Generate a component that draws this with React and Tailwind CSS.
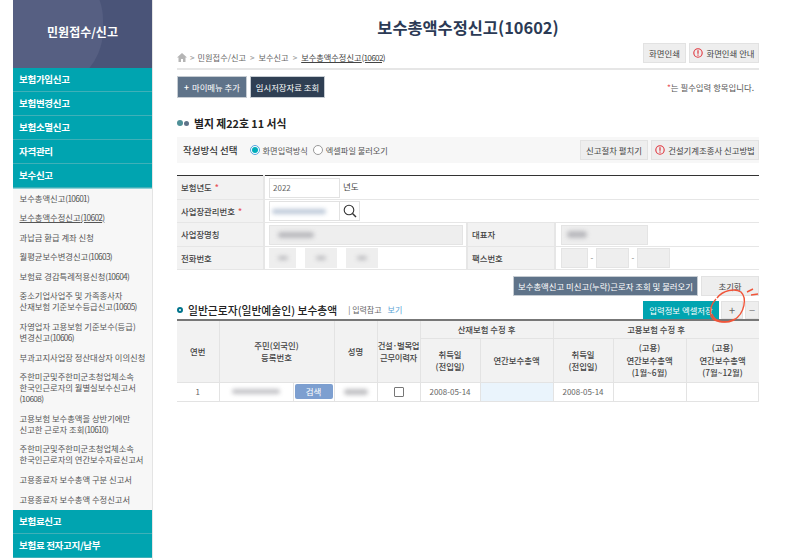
import React from 'react';

const font = "[font-family:'Noto_Sans_CJK_KR','Noto_Sans',sans-serif]";

const topMenu = ['보험가입신고', '보험변경신고', '보험소멸신고', '자격관리', '보수신고'];
const subMenu = [
  { lines: ['보수총액신고(10601)'] },
  { lines: ['보수총액수정신고(10602)'], active: true },
  { lines: ['과납금 환급 계좌 신청'] },
  { lines: ['월평균보수변경신고(10603)'] },
  { lines: ['보험료 경감특례적용신청(10604)'] },
  { lines: ['중소기업사업주 및 가족종사자', '산재보험 기준보수등급신고(10605)'] },
  { lines: ['자영업자 고용보험 기준보수(등급)', '변경신고(10606)'] },
  { lines: ['부과고지사업장 정산대상자 이의신청'] },
  { lines: ['주한미군및주한미군초청업체소속', '한국인근로자의 월별실보수신고서', '(10608)'] },
  { lines: ['고용보험 보수총액을 상반기에만', '신고한 근로자 조회(10610)'] },
  { lines: ['주한미군및주한미군초청업체소속', '한국인근로자의 연간보수자료신고서'] },
  { lines: ['고용종료자 보수총액 구분 신고서'] },
  { lines: ['고용종료자 보수총액 수정신고서'] },
];

// form numbers like (10601) are set much tighter than the hangul
function Tight({ text }) {
  return text.split(/(\(\d+\))/).map((part, i) =>
    /^\(\d+\)$/.test(part)
      ? <span key={i} className="tracking-[-0.7px]">{part}</span>
      : <span key={i}>{part}</span>
  );
}

function MenuBar({ label }) {
  return (
    <div className="h-6 flex items-center pl-[6px] bg-[#00a4b0] border-b border-[#3fb0b8] text-[9.5px] tracking-[-0.3px] font-bold text-white">
      {label}
    </div>
  );
}

function Sidebar() {
  return (
    <aside className="w-[140px] ml-[13px] shrink-0 h-[560px] overflow-hidden border-r border-[#e4e4e4]">
      <div className="relative h-[68px] bg-[#4a5478] overflow-hidden flex items-center justify-center text-[12px] font-bold text-white">
        <div className="absolute -left-[30px] -top-[40px] w-[120px] h-[130px] rounded-full bg-[#565f82]" />
        <span className="relative -mt-[4px]">민원접수/신고</span>
      </div>
      {topMenu.map((m) => <MenuBar key={m} label={m} />)}
      <ul className="bg-[#f7f7f7] h-[322px] border-t border-[#8fd3d8] text-[#555] text-[8.3px] leading-[11px]">
        {subMenu.map((s, i) => (
          <li key={i} className="pl-[6.5px] py-[3.5px] mb-[1.6px] whitespace-nowrap">
            {s.lines.map((l) => (
              <div key={l} className={s.active ? 'underline' : ''}><Tight text={l} /></div>
            ))}
          </li>
        ))}
      </ul>
      <MenuBar label="보험료신고" />
      <MenuBar label="보험료 전자고지/납부" />
    </aside>
  );
}

function AlertIcon() {
  return (
    <svg width="10" height="10" viewBox="0 0 10 10" className="shrink-0">
      <circle cx="5" cy="5" r="4.2" fill="none" stroke="#e0343c" strokeWidth="1.1" />
      <rect x="4.4" y="2.2" width="1.2" height="3.6" fill="#e0343c" />
      <rect x="4.4" y="6.5" width="1.2" height="1.2" fill="#e0343c" />
    </svg>
  );
}

function GrayBtn({ children, className = '' }) {
  return (
    <button className={`flex items-center justify-center gap-[3px] whitespace-nowrap bg-[#eeeeee] border border-[#e2e2e2] text-[#444] text-[8.4px] ${className}`}>
      {children}
    </button>
  );
}

function Blur({ className = '' }) {
  return <div className={`bg-[#b9b9bd] blur-[2px] rounded-sm ${className}`} />;
}

function Label({ children, req }) {
  return (
    <td className="bg-[#f2f2f2] border-b border-r-2 border-[#e6e6e6] pl-[4px] text-[8.4px] font-medium text-[#444]">
      {children}
      {req && <span className="text-[#e8555a] ml-[3px]">*</span>}
    </td>
  );
}

function Disabled({ className = '' }) {
  return <div className={`h-5 bg-[#eeeeee] border border-[#e4e4e4] ${className}`} />;
}

function InfoForm() {
  return (
    <table className="w-[582px] mt-[12px] table-fixed border-collapse border-t border-[#333]">
      <colgroup>
        <col className="w-[87px]" />
        <col className="w-[203px]" />
        <col className="w-[88px]" />
        <col />
      </colgroup>
      <tbody>
        <tr className="h-6">
          <Label req>보험년도</Label>
          <td colSpan={3} className="border-b border-[#e6e6e6] pl-[4px]">
            <div className="flex items-start gap-[3px] text-[8.5px] text-[#444]">
              <div className="w-[71px] h-5 border border-[#e2e2e2] flex items-center pl-[3px] text-[8px] text-[#666]">2022</div>
              <span className="leading-[16px]">년도</span>
            </div>
          </td>
        </tr>
        <tr className="h-[23px]">
          <Label req>사업장관리번호</Label>
          <td colSpan={3} className="border-b border-[#e6e6e6] pl-[4px]">
            <div className="flex w-[91px] h-5 border border-[#e2e2e2]">
              <div className="w-[70px] border-r border-[#e2e2e2] flex items-center pl-[2px]">
                <Blur className="w-[54px] h-[5px] bg-[#bcc8d8]" />
              </div>
              <div className="flex-1 flex items-center justify-center">
                <svg width="14" height="14" viewBox="0 0 14 14" fill="none" stroke="#333" strokeWidth="1.1">
                  <circle cx="6" cy="6" r="4.8" />
                  <path d="M9.5 9.5 L13 13" strokeWidth="1.4" />
                </svg>
              </div>
            </div>
          </td>
        </tr>
        <tr className="h-6">
          <Label>사업장명칭</Label>
          <td className="border-b border-[#e6e6e6] pl-[4px] border-r-2">
            <div className="w-[194px] h-5 bg-[#eeeeee] border border-[#e4e4e4] flex items-center pl-[8px]">
              <Blur className="w-[36px] h-[6px] bg-[#aeaeb2]" />
            </div>
          </td>
          <Label>대표자</Label>
          <td className="border-b border-[#e6e6e6] pl-[5px]">
            <div className="w-[87px] h-5 bg-[#eeeeee] border border-[#e4e4e4] flex items-center pl-[5px]">
              <Blur className="w-[20px] h-[7px] bg-[#b5b5b8]" />
            </div>
          </td>
        </tr>
        <tr className="h-[23px]">
          <Label>전화번호</Label>
          <td className="border-b border-[#e6e6e6] pl-[4px] border-r-2">
            <div className="flex gap-[9px]">
              {[27, 32, 32].map((w, i) => (
                <div key={i} style={{ width: w }} className="h-5 bg-[#eeeeee] flex items-center justify-center">
                  <Blur className="w-[10px] h-[4px] bg-[#bdbdc0]" />
                </div>
              ))}
            </div>
          </td>
          <Label>팩스번호</Label>
          <td className="border-b border-[#e6e6e6] pl-[5px]">
            <div className="flex items-center text-[8px] text-[#777]">
              <Disabled className="w-[27px]" />
              <span className="w-[8px] text-center">-</span>
              <Disabled className="w-[33px]" />
              <span className="w-[8px] text-center">-</span>
              <Disabled className="w-[33px]" />
            </div>
          </td>
        </tr>
      </tbody>
    </table>
  );
}

function Th({ children, className = '', ...rest }) {
  return (
    <th {...rest} className={`bg-[#f2f2f2] border border-[#e3e3e3] text-[8.4px] leading-[12.5px] font-medium text-[#444] whitespace-nowrap ${className}`}>
      {children}
    </th>
  );
}

function Td({ children, className = '' }) {
  return <td className={`border border-[#e3e3e3] text-center text-[8px] text-[#666] ${className}`}>{children}</td>;
}

function PayTable() {
  return (
    <table className="w-[582px] table-fixed border-collapse border-t-2 border-[#777]">
      <colgroup>
        <col className="w-[42px]" />
        <col className="w-[115px]" />
        <col className="w-[43px]" />
        <col className="w-[43px]" />
        <col className="w-[60px]" />
        <col className="w-[73px]" />
        <col className="w-[60px]" />
        <col className="w-[73px]" />
        <col />
      </colgroup>
      <thead>
        <tr className="h-[18px]">
          <Th rowSpan={2} className="border-l-0">연번</Th>
          <Th rowSpan={2}>주민(외국인)<br />등록번호</Th>
          <Th rowSpan={2}>성명</Th>
          <Th rowSpan={2} className="tracking-[-0.3px]">건설·벌목업<br />근무이력자</Th>
          <Th colSpan={2}>산재보험 수정 후</Th>
          <Th colSpan={3} className="border-r-0">고용보험 수정 후</Th>
        </tr>
        <tr className="h-[44px]">
          <Th>취득일<br />(전입일)</Th>
          <Th>연간보수총액</Th>
          <Th>취득일<br />(전입일)</Th>
          <Th>(고용)<br />연간보수총액<br />(1월~6월)</Th>
          <Th className="border-r-0">(고용)<br />연간보수총액<br />(7월~12월)</Th>
        </tr>
      </thead>
      <tbody>
        <tr className="h-[19px]">
          <Td className="border-l-0">1</Td>
          <td className="border border-[#e3e3e3]">
            <div className="flex items-center h-[18px]">
              <div className="w-[73px] flex justify-center">
                <Blur className="w-[48px] h-[5px] bg-[#c2c2c6]" />
              </div>
              <div className="w-px h-full bg-[#e3e3e3]" />
              <button className="ml-[1px] w-[38px] h-[15px] rounded-[2px] bg-[#7d9fd0] text-white text-[8.5px] leading-none">검색</button>
            </div>
          </td>
          <td className="border border-[#e3e3e3]">
            <Blur className="w-[24px] h-[6px] mx-auto bg-[#c0c0c3]" />
          </td>
          <td className="border border-[#e3e3e3]">
            <div className="w-[10px] h-[10px] mx-auto border border-[#777] rounded-[1px] bg-white" />
          </td>
          <Td>2008-05-14</Td>
          <Td className="bg-[#eaf4fc]" />
          <Td>2008-05-14</Td>
          <Td />
          <Td />
        </tr>
      </tbody>
    </table>
  );
}

export default function App() {
  return (
    <div className={`${font} w-[800px] h-[560px] overflow-hidden flex bg-white`}>
      <Sidebar />
      <main className="w-[582px] ml-[24px] shrink-0">
        <h1 className="h-[43px] pt-[15px] text-center text-[16.4px] leading-[24px] font-bold text-[#2b3a55]">
          보수총액수정신고(10602)
        </h1>

        <div className="flex justify-between items-start h-[27px] border-b-2 border-[#e6e6e6]">
          <div className="flex items-center gap-[3px] text-[8.2px] text-[#666] pt-[8px]">
            <svg width="10" height="9" viewBox="0 0 10 9" fill="#b5b5b5">
              <path d="M5 0 L10 4.5 H8.5 V9 H6 V6 H4 V9 H1.5 V4.5 H0 Z" />
            </svg>
            <span className="text-[#999]">&gt;</span>
            <span>민원접수/신고</span>
            <span className="text-[#999] mx-[1px]">&gt;</span>
            <span>보수신고</span>
            <span className="text-[#999] mx-[1px]">&gt;</span>
            <span className="underline text-[#444]"><Tight text="보수총액수정신고(10602)" /></span>
          </div>
          <div className="flex gap-[3px] h-5">
            <GrayBtn className="w-[43px]">화면인쇄</GrayBtn>
            <GrayBtn className="w-[70px]"><AlertIcon />화면인쇄 안내</GrayBtn>
          </div>
        </div>

        <div className="flex justify-between mt-[6px]">
          <div className="flex gap-[3px]">
            <button className="w-[70px] h-[22px] bg-[#5f7389] border border-[#c6ccd2] text-white text-[8.4px] whitespace-nowrap">
              <b className="mr-[3px]">+</b>마이메뉴 추가
            </button>
            <button className="w-[75px] h-[22px] bg-[#2f3f53] border border-[#c6ccd2] text-white text-[8.4px] whitespace-nowrap">
              임시저장자료 조회
            </button>
          </div>
          <p className="text-[8.4px] text-[#555] pr-[5px] pt-[5px]">
            <span className="text-[#e8555a]">*</span>는 필수입력 항목입니다.
          </p>
        </div>

        <div className="flex items-center mt-[17px] h-[16px] text-[10.8px] font-bold text-[#222]">
          <span className="w-[6px] h-[6px] rounded-full bg-[#4f9097]" />
          <span className="w-[5px] h-[5px] rounded-full bg-[#5f7389] ml-[1px] mr-[5px]" />
          별지 제22호 11 서식
        </div>

        <div className="flex items-center justify-between h-[26px] mt-[6px] pl-[6px] bg-[#f7f7f7]">
          <div className="flex items-center text-[8.2px] text-[#555]">
            <span className="text-[9.5px] font-medium text-[#333] mr-[12px]">작성방식 선택</span>
            <span className="w-[10px] h-[10px] rounded-full border border-[#55a6e0] bg-white flex items-center justify-center mr-[3px]">
              <span className="w-[6px] h-[6px] rounded-full bg-[#00aebb]" />
            </span>
            화면입력방식
            <span className="w-[10px] h-[10px] rounded-full border border-[#999] bg-white ml-[5px] mr-[3px]" />
            엑셀파일 불러오기
          </div>
          <div className="flex gap-[3px] h-5">
            <GrayBtn className="w-[68px]">신고절차 펼치기</GrayBtn>
            <GrayBtn className="w-[108px]"><AlertIcon />건설기계조종사 신고방법</GrayBtn>
          </div>
        </div>

        <InfoForm />

        <div className="flex justify-end gap-[3px] mt-[6px]">
          <button className="w-[185px] h-5 bg-[#5f7389] border border-[#c6ccd2] text-white text-[8.4px] whitespace-nowrap">
            보수총액신고 미신고(누락)근로자 조회 및 불러오기
          </button>
          <GrayBtn className="w-[58px] h-5 text-[#333]">초기화</GrayBtn>
        </div>

        <div className="relative flex items-end justify-between h-[23px]">
          <div className="flex items-center text-[10.8px] font-medium text-[#222] mb-[1px]">
            <span className="w-[6px] h-[6px] rounded-full border-2 border-[#00748c] mr-[5px]" />
            일반근로자(일반예술인) 보수총액
            <span className="text-[8px] font-normal text-[#666] ml-[11px]">| 입력참고</span>
            <span className="text-[8px] font-normal text-[#5ba3d6] ml-[6px]">보기</span>
          </div>
          <div className="flex h-[18px]">
            <button className="w-[76px] bg-[#00a4b0] text-white text-[8.4px] whitespace-nowrap">입력정보 엑셀저장</button>
            <GrayBtn className="w-[22px] ml-[2px] text-[11px] text-[#666]">+</GrayBtn>
            <GrayBtn className="w-[14px] ml-[2px] text-[11px] text-[#888]">−</GrayBtn>
          </div>
          <svg width="50" height="40" viewBox="0 0 50 40" fill="none" stroke="#f0553a" strokeWidth="1.4" className="absolute right-0 -top-[7px] overflow-visible">
            <path d="M8 9 C14 1 26 -1 32 3 C38 9 36 24 25 31 C16 35 4 33 2 27 C0 21 3 14 7 10" />
            <path d="M3 25 C5 33 17 35 26 30" />
            <path d="M38 3 L44 0 M42 6 L49 5" strokeWidth="1.4" />
          </svg>
        </div>

        <PayTable />
      </main>
    </div>
  );
}
